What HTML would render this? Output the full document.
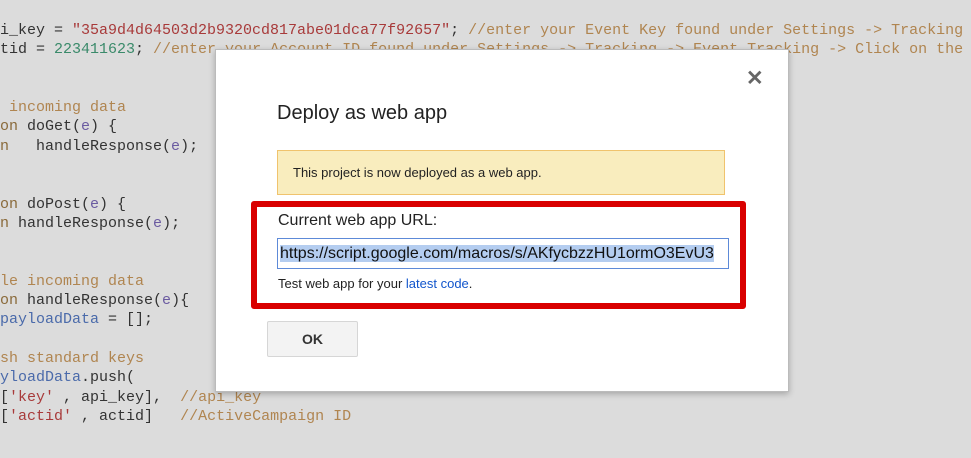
<!DOCTYPE html>
<html><head><style>
body{margin:0;width:971px;height:458px;background:#dcdcdc;overflow:hidden;position:relative;font-family:"Liberation Sans",sans-serif}
pre{position:absolute;left:0;top:21px;width:971px;overflow:hidden;margin:0;font:15px/19.3px "Liberation Mono","DejaVu Sans Mono",monospace;color:#333}
.c{color:#b08550}.s{color:#a83a3a}.n{color:#3a8a6a}.v{color:#4a6aaa}.k{color:#8a6a3a}.p{color:#6a5aa0}
#dlg{position:absolute;left:215px;top:49px;width:572px;height:341px;background:#fff;border:1px solid #bbb;box-shadow:0 2px 6px rgba(0,0,0,.25)}
</style></head><body>
<pre><span>i_key = </span><span class="s">"35a9d4d64503d2b9320cd817abe01dca77f92657"</span>; <span class="c">//enter your Event Key found under Settings -&gt; Tracking -</span>
tid = <span class="n">223411623</span>; <span class="c">//enter your Account ID found under Settings -&gt; Tracking -&gt; Event Tracking -&gt; Click on the L</span>


<span class="c"> incoming data</span>
<span class="k">on</span> doGet(<span class="p">e</span>) {
<span class="k">n</span>   handleResponse(<span class="p">e</span>);


<span class="k">on</span> doPost(<span class="p">e</span>) {
<span class="k">n</span> handleResponse(<span class="p">e</span>);


<span class="c">le incoming data</span>
<span class="k">on</span> handleResponse(<span class="p">e</span>){
<span class="v">payloadData</span> = [];

<span class="c">sh standard keys</span>
<span class="v">yloadData</span>.push(
[<span class="s">'key'</span> , api_key],  <span class="c">//api_key</span>
[<span class="s">'actid'</span> , actid]   <span class="c">//ActiveCampaign ID</span></pre>
<div id="dlg">
<div style="position:absolute;left:530px;top:16px;font-size:21px;color:#666;font-weight:bold">✕</div>
<div style="position:absolute;left:61px;top:52px;font-size:20px;color:#222">Deploy as web app</div>
<div style="position:absolute;left:61px;top:100px;width:448px;height:45px;background:#f9edbe;border:1px solid #f0c36d;box-sizing:border-box;font-size:13px;line-height:43px;padding-left:15px;color:#222">This project is now deployed as a web app.</div>
<div style="position:absolute;left:35px;top:151px;width:495px;height:108px;border:6px solid #d90000;border-radius:3px;box-sizing:border-box"></div>
<div style="position:absolute;left:62px;top:162px;font-size:16px;color:#222">Current web app URL:</div>
<div style="position:absolute;left:61px;top:188px;width:452px;height:31px;border:1px solid #5d8ad8;box-sizing:border-box;font-size:16px;line-height:29px;padding-left:2px;overflow:hidden;white-space:nowrap;color:#111"><span style="background:#b4cdf0">https://script.google.com/macros/s/AKfycbzzHU1ormO3EvU3</span></div>
<div style="position:absolute;left:62px;top:226px;font-size:13px;color:#222">Test web app for your <span style="color:#15c">latest code</span>.</div>
<div style="position:absolute;left:51px;top:271px;width:91px;height:36px;background:#f3f3f3;border:1px solid #d6d6d6;box-sizing:border-box;border-radius:2px;text-align:center;line-height:34px;font-size:14px;font-weight:bold;color:#333">OK</div>
</div>
</body></html>
